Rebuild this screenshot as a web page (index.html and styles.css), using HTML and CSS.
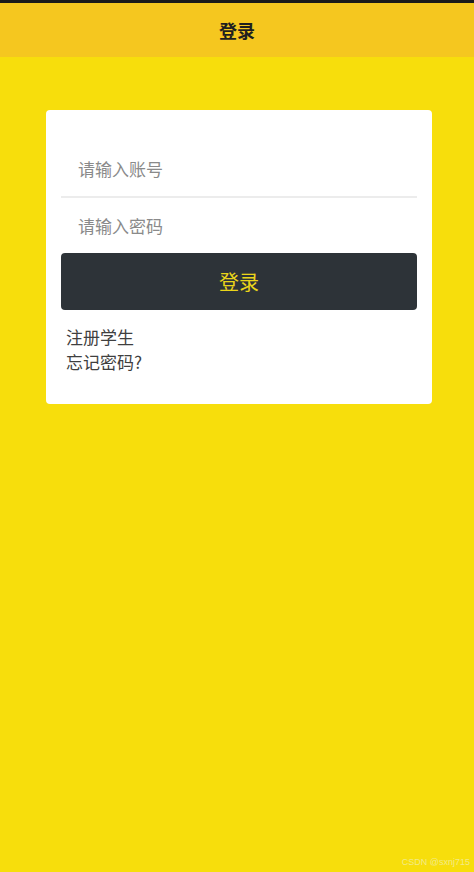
FILE: index.html
```html
<!DOCTYPE html>
<html lang="zh">
<head>
<meta charset="utf-8">
<link rel="stylesheet" href="styles.css">
</head>
<body>
<div class="page">
  <div class="topline"></div>
  <header class="header">登录</header>
  <main class="main">
    <div class="card">
      <div class="field">请输入账号</div>
      <div class="divider"></div>
      <div class="field">请输入密码</div>
      <button class="btn">登录</button>
      <div class="links">
        <div class="link">注册学生</div>
        <div class="link">忘记密码?</div>
      </div>
    </div>
  </main>
  <div class="watermark">CSDN @sxnj715</div>
</div>
</body>
</html>
```
FILE: styles.css
```css
html, body {
  margin: 0;
  padding: 0;
}
body {
  font-family: "Noto Sans CJK SC", "Noto Sans", sans-serif;
  background: #f7de0c;
}
.page {
  width: 474px;
  height: 872px;
  display: flex;
  flex-direction: column;
  position: relative;
  background: #f7de0c;
}
.topline {
  height: 3px;
  background: #1a1a1a;
}
.header {
  height: 54px;
  background: #f5c71f;
  display: flex;
  align-items: center;
  justify-content: center;
  font-size: 18px;
  font-weight: 700;
  color: #1f1f1f;
}
.main {
  flex: 1;
  padding: 53px 42px 0 46px;
}
.card {
  background: #ffffff;
  border-radius: 4px;
  padding: 31px 15px 30px 15px;
  display: flex;
  flex-direction: column;
}
.field {
  height: 55px;
  display: flex;
  align-items: center;
  padding-left: 17px;
  font-size: 17px;
  color: #8a8a8a;
}
.divider {
  height: 2px;
  background: #ececec;
}
.btn {
  margin-top: 0;
  height: 57px;
  border: none;
  border-radius: 4px;
  background: #2d3338;
  color: #ead51a;
  font-family: inherit;
  font-size: 20px;
  display: flex;
  align-items: center;
  justify-content: center;
}
.links {
  padding: 14px 0 0 5px;
  display: flex;
  flex-direction: column;
}
.link {
  font-size: 17px;
  line-height: 25px;
  color: #3f3f3f;
}
.watermark {
  position: absolute;
  right: 4px;
  bottom: 5px;
  font-family: "Liberation Sans", sans-serif;
  font-size: 9px;
  color: #f2ea88;
}
```
